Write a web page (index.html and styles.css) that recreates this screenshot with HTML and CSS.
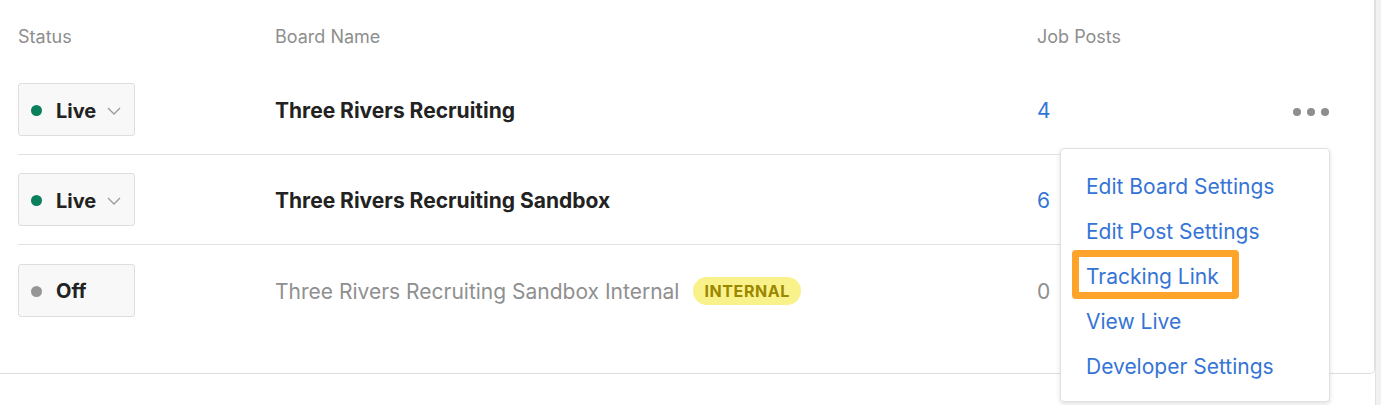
FILE: index.html
```html
<!DOCTYPE html>
<html>
<head>
<meta charset="utf-8">
<link rel="stylesheet" href="styles.css">
</head>
<body>
<div class="page">
<div class="card">
  <div class="table">
    <div class="row head">
      <div>Status</div>
      <div>Board Name</div>
      <div>Job Posts</div>
      <div></div>
    </div>
    <div class="row line">
      <div><div class="status"><span class="dot live"></span><span class="label">Live</span><svg class="chev" viewBox="0 0 14 8" width="14" height="8"><path d="M1 1 L7 7 L13 1" fill="none" stroke="#9a9a9a" stroke-width="1.3"/></svg></div></div>
      <div class="name">Three Rivers Recruiting</div>
      <div class="count">4</div>
      <div class="actions"><span></span><span></span><span></span></div>
    </div>
    <div class="row line">
      <div><div class="status"><span class="dot live"></span><span class="label">Live</span><svg class="chev" viewBox="0 0 14 8" width="14" height="8"><path d="M1 1 L7 7 L13 1" fill="none" stroke="#9a9a9a" stroke-width="1.3"/></svg></div></div>
      <div class="name">Three Rivers Recruiting Sandbox</div>
      <div class="count">6</div>
      <div></div>
    </div>
    <div class="row">
      <div><div class="status"><span class="dot off"></span><span class="label">Off</span></div></div>
      <div class="name muted">Three Rivers Recruiting Sandbox Internal <span class="badge">INTERNAL</span></div>
      <div class="count zero">0</div>
      <div></div>
    </div>
  </div>
</div>
<div class="strip"></div>
</div>
<div class="menu">
  <a class="item">Edit Board Settings</a>
  <a class="item">Edit Post Settings</a>
  <a class="item">Tracking Link</a>
  <a class="item">View Live</a>
  <a class="item">Developer Settings</a>
  <div class="highlight"></div>
</div>
</body>
</html>
```

FILE: styles.css
```css
* { box-sizing: border-box; }
html, body { margin: 0; padding: 0; }
body {
  background: #fff;
  font-family: Inter, "Liberation Sans", sans-serif;
  width: 1381px;
  height: 405px;
  overflow: hidden;
  position: relative;
}
.page {
  display: flex;
  align-items: flex-start;
  height: 405px;
}
.card {
  margin: -10px 0 0 -10px;
  width: 1385px;
  flex: none;
  height: 384px;
  background: #fff;
  border-right: 1px solid #dedede;
  border-bottom: 1px solid #dedede;
  border-bottom-right-radius: 5px;
  padding: 10px 45px 0 28px;
}
.strip {
  flex: 1;
  height: 405px;
  background: #f1f1f1;
  border-left: 1px solid #e2e2e2;
}
.row {
  display: grid;
  grid-template-columns: 257px 762px 1fr 36px;
  align-items: center;
  height: 90px;
}
.row.head {
  height: 65px;
  font-size: 18px;
  color: #8e8e8e;
  align-items: start;
  padding-top: 26px;
}
.row.line { border-bottom: 1px solid #e2e2e2; }
.status {
  width: 117px;
  height: 53px;
  background: #f8f8f8;
  border: 1px solid #dedede;
  border-radius: 3px;
  display: flex;
  align-items: center;
  padding-left: 12px;
  padding-top: 2px;
}
.dot {
  width: 11px;
  height: 11px;
  border-radius: 50%;
  margin-right: 14px;
}
.dot.live { background: #0a7f5c; }
.dot.off { background: #969696; }
.label {
  font-weight: 700;
  font-size: 20px;
  color: #222;
}
.chev { margin-left: 11px; }
.name {
  font-size: 21px;
  font-weight: 700;
  color: #222;
  display: flex;
  align-items: center;
  padding-top: 2px;
}
.name.muted {
  font-weight: 400;
  color: #8f8f8f;
}
.badge {
  margin-left: 14px;
  height: 28px;
  padding: 0 11px;
  border-radius: 14px;
  background: #f9f28b;
  color: #9b8700;
  font-size: 16px;
  font-weight: 700;
  display: inline-flex;
  align-items: center;
  letter-spacing: 0.6px;
}
.count {
  font-size: 21px;
  color: #3574d6;
  padding-top: 2px;
}
.count.zero { color: #8f8f8f; }
.actions {
  display: flex;
  gap: 6px;
  padding-top: 5px;
}
.actions span {
  width: 8px;
  height: 8px;
  border-radius: 50%;
  background: #8e8e8e;
}
.menu {
  position: absolute;
  left: 1060px;
  top: 148px;
  width: 270px;
  height: 254px;
  background: #fff;
  border: 1px solid #e0e0e0;
  border-radius: 4px;
  box-shadow: 0 2px 5px rgba(0,0,0,0.12);
  padding: 15px 0 0 25px;
  display: flex;
  flex-direction: column;
}
.item {
  height: 45px;
  line-height: 45px;
  font-size: 21px;
  color: #3574d6;
}
.highlight {
  position: absolute;
  left: 11px;
  top: 101px;
  width: 167px;
  height: 49px;
  border: 7px solid #ffa42b;
  border-radius: 4px;
}
```
